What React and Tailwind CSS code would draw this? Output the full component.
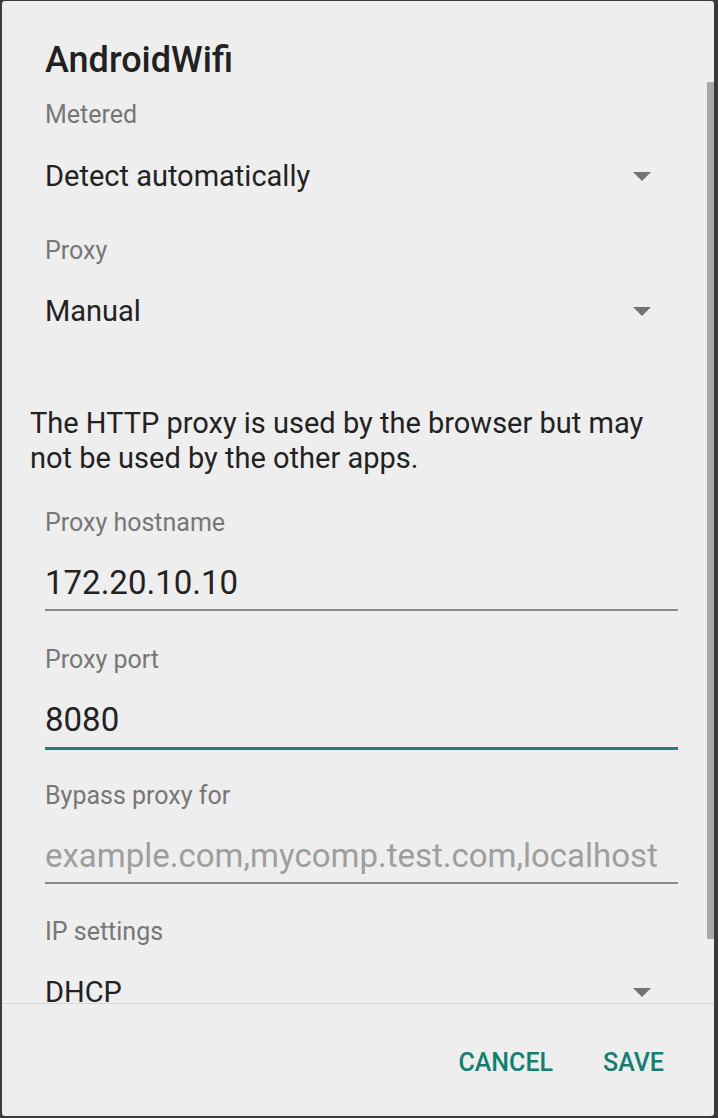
import React from "react";

function Label({ children, mt }) {
  return (
    <div className={`h-[30px] leading-[30px] text-[25px] text-[#777777] ${mt}`}>{children}</div>
  );
}

function Arrow() {
  return (
    <svg width="18" height="9" viewBox="0 0 18 9" className="shrink-0">
      <path d="M0 0 L18 0 L9 9 Z" fill="#737373" />
    </svg>
  );
}

function SpinnerRow({ value, mt }) {
  return (
    <div className={`h-[40px] flex items-center justify-between pr-[27px] ${mt}`}>
      <span className="text-[29px] leading-[40px] text-[#222222]">{value}</span>
      <Arrow />
    </div>
  );
}

export default function App() {
  return (
    <div
      className="w-[718px] h-[1118px] bg-[#3a3a3a] pl-[2px] pt-[1px] pr-[4px] pb-[2px] flex"
      style={{ fontFamily: "Roboto, 'Noto Sans', sans-serif" }}
    >
      <div className="flex-1 flex flex-col bg-[#eeeeee] rounded-[3px] overflow-hidden">
        {/* scrolling body */}
        <div className="relative h-[1002px] overflow-hidden pl-[43px] pr-[36px] pt-[39px]">
          <div className="h-[40px] leading-[40px] text-[36px] font-medium text-[#212121]">AndroidWifi</div>

          <Label mt="mt-[20px]">Metered</Label>
          <SpinnerRow value="Detect automatically" mt="mt-[26px]" />

          <Label mt="mt-[40px]">Proxy</Label>
          <SpinnerRow value="Manual" mt="mt-[25px]" />

          <p className="mt-[75px] -ml-[15px] text-[29px] leading-[35px] text-[#222222]">
            The HTTP proxy is used by the browser but may not be used by the other apps.
          </p>

          <Label mt="mt-[32px]">Proxy hostname</Label>
          <div className="mt-[25px] h-[40px] leading-[40px] text-[33px] text-[#222222]">172.20.10.10</div>
          <div className="mt-[6px] h-[2px] bg-[#8a8a8a]" />

          <Label mt="mt-[34px]">Proxy port</Label>
          <div className="mt-[25px] h-[40px] leading-[40px] text-[33px] text-[#222222]">8080</div>
          <div className="mt-[7px] h-[3px] bg-[#1e8174]" />

          <Label mt="mt-[31px]">Bypass proxy for</Label>
          <div className="mt-[25px] h-[40px] leading-[40px] text-[33px] text-[#9e9e9e] whitespace-nowrap">
            example.com,mycomp.test.com,localhost
          </div>
          <div className="mt-[6px] h-[2px] bg-[#8a8a8a]" />

          <Label mt="mt-[33px]">IP settings</Label>
          <SpinnerRow value="DHCP" mt="mt-[25px]" />

          {/* scrollbar thumb */}
          <div className="absolute right-0 top-[81px] w-[7px] h-[857px] bg-[#a9a9a9]" />
        </div>

        <div className="h-[1px] bg-[#d6d6d6]" />

        {/* actions */}
        <div className="flex-1 flex items-start justify-end gap-[50px] pr-[50px] pt-[41px]">
          <button className="h-[36px] leading-[36px] text-[25px] font-medium text-[#11806f]">CANCEL</button>
          <button className="h-[36px] leading-[36px] text-[25px] font-medium text-[#11806f]">SAVE</button>
        </div>
      </div>
    </div>
  );
}
